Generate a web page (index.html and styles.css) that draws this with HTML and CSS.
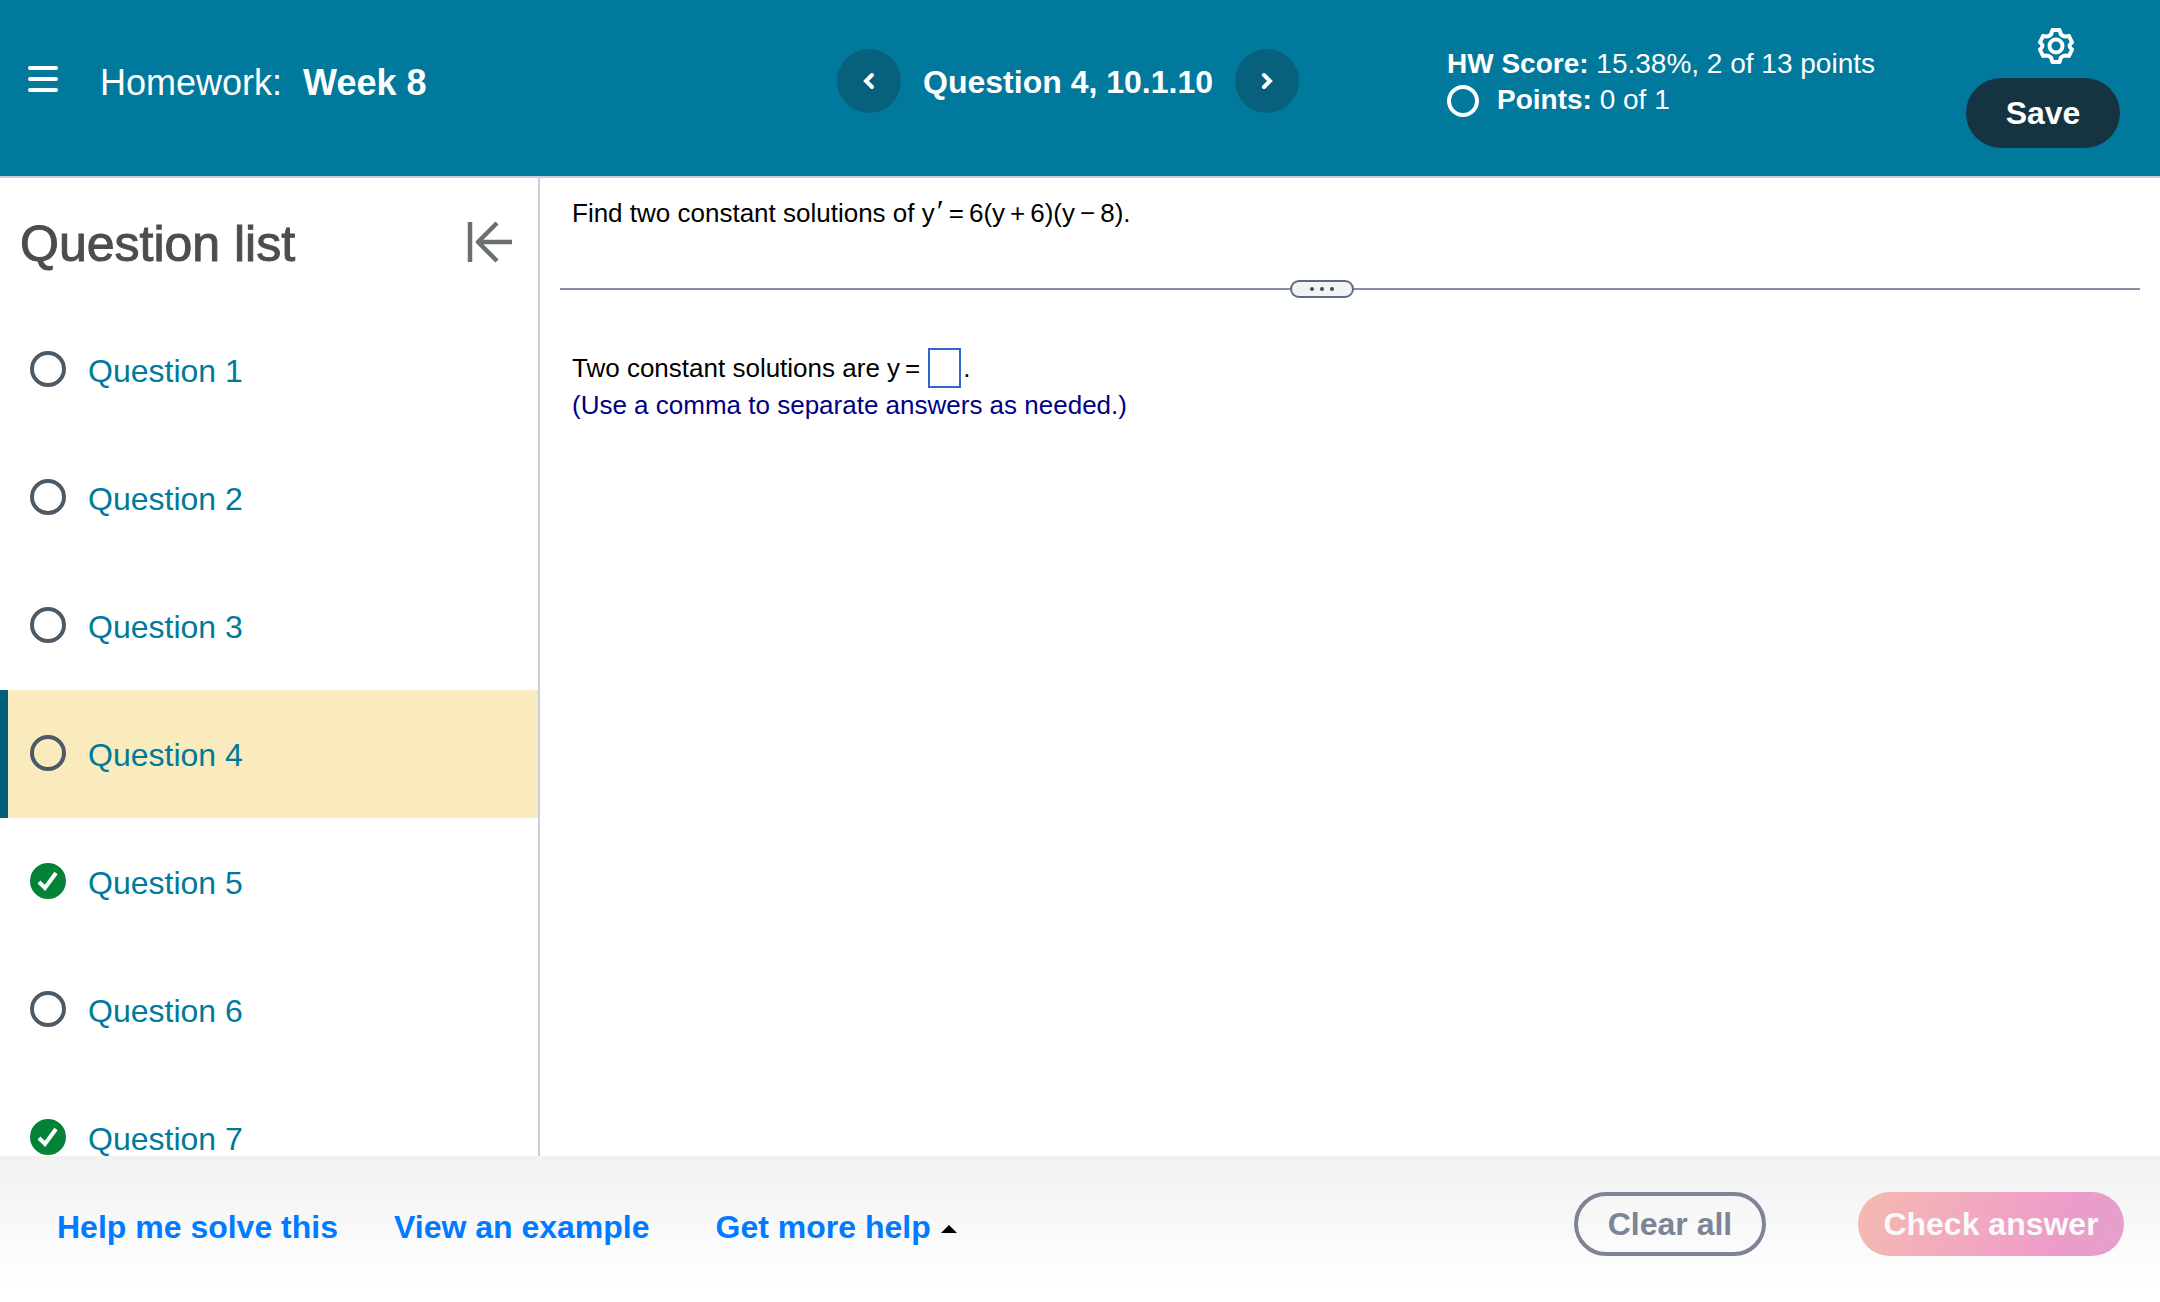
FILE: index.html
```html
<!DOCTYPE html>
<html lang="en">
<head>
<meta charset="utf-8">
<title>Homework: Week 8</title>
<link rel="stylesheet" href="styles.css">
</head>
<body>
<header class="topbar">
  <div class="topbar-title">
    <button class="icon-button menu-button" type="button" aria-label="Menu">
      <svg width="30" height="28" viewBox="0 0 30 28" fill="none" stroke="currentColor" stroke-width="4" stroke-linecap="round"><path d="M2 3h26M2 14h26M2 25h26"/></svg>
    </button>
    <h1 class="course"><span>Homework:</span><strong>Week 8</strong></h1>
  </div>
  <nav class="pager" aria-label="Question navigation">
    <button class="pager-button" type="button" aria-label="Previous question">
      <svg width="12" height="18" viewBox="0 0 12 18" fill="none" stroke="currentColor" stroke-width="4" stroke-linecap="round"><path d="M9 3 3 9l6 6"/></svg>
    </button>
    <h2 class="pager-title">Question 4, 10.1.10</h2>
    <button class="pager-button" type="button" aria-label="Next question">
      <svg width="12" height="18" viewBox="0 0 12 18" fill="none" stroke="currentColor" stroke-width="4" stroke-linecap="round"><path d="m3 3 6 6-6 6"/></svg>
    </button>
  </nav>
  <div class="score">
    <p><strong>HW Score:</strong> 15.38%, 2 of 13 points</p>
    <p class="points">
      <svg width="32" height="32" viewBox="0 0 32 32" fill="none" stroke="currentColor" stroke-width="4"><circle cx="16" cy="16" r="14"/></svg>
      <span><strong>Points:</strong> 0 of 1</span>
    </p>
  </div>
  <div class="actions">
    <button class="icon-button settings-button" type="button" aria-label="Settings">
      <svg width="36" height="36" viewBox="0 0 36 36" fill="none" stroke="currentColor" stroke-width="4" stroke-linejoin="round"><path d="M14.500 2h7l1.500 4.500q2 2 4.500 2l3.500-.5 3 6.500q-2.500 2-2.500 3.500t2.500 3.500l-3 6.500-3.500-.5q-2.500 0-4.500 2L21.500 34h-7L13 29.500q-2-2-4.500-2L5 28l-3-6.500q2.500-2 2.500-3.500T2 14.500L5 8l3.500.5q2.500 0 4.500-2z"/><circle cx="18" cy="18" r="6.500"/></svg>
    </button>
    <button class="save-button" type="button">Save</button>
  </div>
</header>

<div class="workspace">
  <aside class="sidebar">
    <div class="sidebar-head">
      <h2 class="sidebar-title">Question list</h2>
      <button class="icon-button collapse-button" type="button" aria-label="Collapse question list">
        <svg width="46" height="42" viewBox="0 0 46 42" fill="none" stroke="currentColor" stroke-width="4.500" stroke-linejoin="round"><path d="M3 1v40M45 21H11M30 2 11 21l19 19"/></svg>
      </button>
    </div>
    <ul class="questions">
      <li class="question"><svg class="status" viewBox="0 0 36 36"><circle class="ring" cx="18" cy="18" r="16"/></svg><a href="#q1">Question 1</a></li>
      <li class="question"><svg class="status" viewBox="0 0 36 36"><circle class="ring" cx="18" cy="18" r="16"/></svg><a href="#q2">Question 2</a></li>
      <li class="question"><svg class="status" viewBox="0 0 36 36"><circle class="ring" cx="18" cy="18" r="16"/></svg><a href="#q3">Question 3</a></li>
      <li class="question current"><svg class="status" viewBox="0 0 36 36"><circle class="ring" cx="18" cy="18" r="16"/></svg><a href="#q4" aria-current="true">Question 4</a></li>
      <li class="question"><svg class="status" viewBox="0 0 36 36"><circle class="disc" cx="18" cy="18" r="18"/><path class="tick" d="m9 19 6 6L26 10"/></svg><a href="#q5">Question 5</a></li>
      <li class="question"><svg class="status" viewBox="0 0 36 36"><circle class="ring" cx="18" cy="18" r="16"/></svg><a href="#q6">Question 6</a></li>
      <li class="question"><svg class="status" viewBox="0 0 36 36"><circle class="disc" cx="18" cy="18" r="18"/><path class="tick" d="m9 19 6 6L26 10"/></svg><a href="#q7">Question 7</a></li>
    </ul>
  </aside>
  <main class="exercise">
    <p class="prompt">Find two constant solutions of y<span class="prime">′</span><span class="op">=</span>6(y<span class="op">+</span>6)(y<span class="op">−</span>8).</p>
    <div class="divider">
      <button class="divider-handle" type="button" aria-label="Resize panes"><i></i><i></i><i></i></button>
    </div>
    <div class="answer">
      <p class="answer-line"><label for="answer">Two constant solutions are y<span class="op">=</span></label><input class="answer-box" id="answer" type="text">.</p>
      <p class="hint">(Use a comma to separate answers as needed.)</p>
    </div>
  </main>
</div>

<footer class="bottombar">
  <nav class="help" aria-label="Help">
    <a href="#solve">Help me solve this</a>
    <a href="#example">View an example</a>
    <a class="more" href="#more">Get more help <svg width="16" height="8" viewBox="0 0 16 8"><path d="M8 0l8 8H0z"/></svg></a>
  </nav>
  <div class="submit">
    <button class="clear-button" type="button">Clear all</button>
    <button class="check-button" type="button">Check answer</button>
  </div>
</footer>
</body>
</html>
```
FILE: styles.css
```css
* {
  box-sizing: border-box;
}

body {
  margin: 0;
  height: 100vh;
  display: flex;
  flex-direction: column;
  overflow: hidden;
  background: #fff;
  color: #000;
  font-family: "Liberation Sans", Arial, sans-serif;
}

h1, h2, p, ul {
  margin: 0;
  padding: 0;
  font-weight: normal;
}

svg {
  display: block;
  flex: none;
}

button {
  font-family: inherit;
  cursor: pointer;
}

a {
  text-decoration: none;
}

.icon-button {
  display: block;
  padding: 0;
  border: 0;
  background: none;
  color: inherit;
}

/* Top bar */
.topbar {
  flex: none;
  display: grid;
  grid-template-columns: 1fr auto 148px auto 88px auto 40px;
  align-items: start;
  height: 178px;
  border-bottom: 2px solid #c9cfdf;
  background: #00799c;
  color: #fff;
}

.topbar-title {
  display: flex;
  align-items: center;
  gap: 42px;
  padding: 63px 0 0 28px;
}

.menu-button {
  margin-bottom: 8px;
}

.course {
  display: flex;
  gap: 21px;
  font-size: 36px;
  line-height: 40px;
}

.pager {
  display: flex;
  align-items: center;
  gap: 22px;
  padding-top: 49px;
}

.pager-button {
  display: grid;
  place-items: center;
  width: 64px;
  height: 64px;
  padding: 0;
  border: 0;
  border-radius: 50%;
  background: #07617d;
  color: #fff;
}

.pager-title {
  padding-top: 2px;
  font-size: 32px;
  font-weight: bold;
  line-height: 36px;
}

.score {
  grid-column: 4;
  padding: 46px 3px 0 0;
  font-size: 28px;
  line-height: 36px;
}

.points {
  display: flex;
  gap: 18px;
}

.points svg {
  margin-top: 3px;
}

.actions {
  grid-column: 6;
  display: flex;
  flex-direction: column;
  align-items: center;
  gap: 14px;
  padding-top: 28px;
}

.settings-button {
  margin-left: 26px;
}

.save-button {
  width: 154px;
  height: 70px;
  padding: 0;
  border: 0;
  border-radius: 35px;
  background: #163342;
  color: #fff;
  font-size: 32px;
  font-weight: bold;
}

/* Question list and exercise */
.workspace {
  flex: 1;
  min-height: 0;
  display: flex;
}

.sidebar {
  flex: none;
  width: 540px;
  overflow: hidden;
  border-right: 2px solid #c9cfdf;
}

.sidebar-head {
  display: flex;
  justify-content: space-between;
  align-items: center;
  height: 128px;
  padding: 0 25px 0 20px;
}

.sidebar-title {
  padding-top: 4px;
  color: #4d4d4d;
  font-size: 50px;
  line-height: 56px;
  -webkit-text-stroke: 1px #4d4d4d;
}

.collapse-button {
  color: #6a7070;
}

.questions {
  list-style: none;
}

.question {
  display: flex;
  align-items: center;
  gap: 22px;
  height: 128px;
  padding-left: 30px;
  font-size: 32px;
  line-height: 36px;
}

.question a {
  padding-top: 2px;
  color: #007a9c;
}

.current {
  padding-left: 22px;
  border-left: 8px solid #005f79;
  background: #f9ebbd;
}

.status {
  width: 36px;
  height: 36px;
  margin-bottom: 2px;
}

.ring {
  fill: none;
  stroke: #4c5966;
  stroke-width: 4;
}

.disc {
  fill: #038238;
}

.tick {
  fill: none;
  stroke: #fff;
  stroke-width: 4;
}

.exercise {
  flex: 1;
  padding: 20px 20px 0;
  font-size: 26px;
  line-height: 30px;
}

.prompt {
  padding-left: 12px;
}

.op {
  margin: 0 5px;
}

.prime {
  margin-right: 2px;
  font-family: "Liberation Serif", serif;
  font-size: 32px;
  font-style: italic;
  line-height: 1px;
}

.divider {
  display: flex;
  align-items: center;
  margin-top: 52px;
}

.divider::before,
.divider::after {
  content: "";
  flex: 1;
  height: 2px;
  background: #868ea3;
}

.divider::before {
  flex: 0 0 calc(50% - 60px);
}

.divider-handle {
  display: flex;
  justify-content: center;
  align-items: center;
  gap: 6px;
  width: 64px;
  height: 18px;
  padding: 0;
  border: 2px solid #5f6c7f;
  border-radius: 9px;
  background: #f1f3f5;
}

.divider-handle i {
  width: 4px;
  height: 4px;
  border-radius: 50%;
  background: #444b55;
}

.answer {
  padding: 50px 0 0 12px;
}

.answer-line {
  display: flex;
  align-items: center;
}

.answer-box {
  width: 33px;
  height: 40px;
  margin: 0 2px 0 3px;
  padding: 0 4px;
  border: 2px solid #2f66cc;
  background: #fff;
  font: inherit;
}

.hint {
  padding-top: 2px;
  color: #000084;
}

/* Bottom bar */
.bottombar {
  flex: none;
  display: flex;
  justify-content: space-between;
  align-items: flex-start;
  height: 146px;
  padding: 36px 36px 0 57px;
  background: linear-gradient(#f1f1f1, #fff 90%);
}

.help {
  display: flex;
  gap: 56px;
  padding-top: 17px;
  font-size: 32px;
  font-weight: bold;
  line-height: 36px;
}

.help a {
  color: #007bff;
}

.help .more {
  display: flex;
  align-items: center;
  gap: 10px;
  padding-left: 10px;
}

.more svg {
  margin-top: 4px;
  fill: #000;
}

.submit {
  display: flex;
  gap: 92px;
}

.clear-button,
.check-button {
  height: 64px;
  padding: 0;
  border-radius: 32px;
  font-size: 32px;
  font-weight: bold;
}

.clear-button {
  width: 192px;
  border: 4px solid #7c8495;
  background: none;
  color: #7c8495;
}

.check-button {
  width: 266px;
  border: 0;
  background: linear-gradient(110deg, #f4bab0, #f1a3c4 55%, #ec9cc9 75%, #e4a0cb);
  color: #fafafa;
}
```
